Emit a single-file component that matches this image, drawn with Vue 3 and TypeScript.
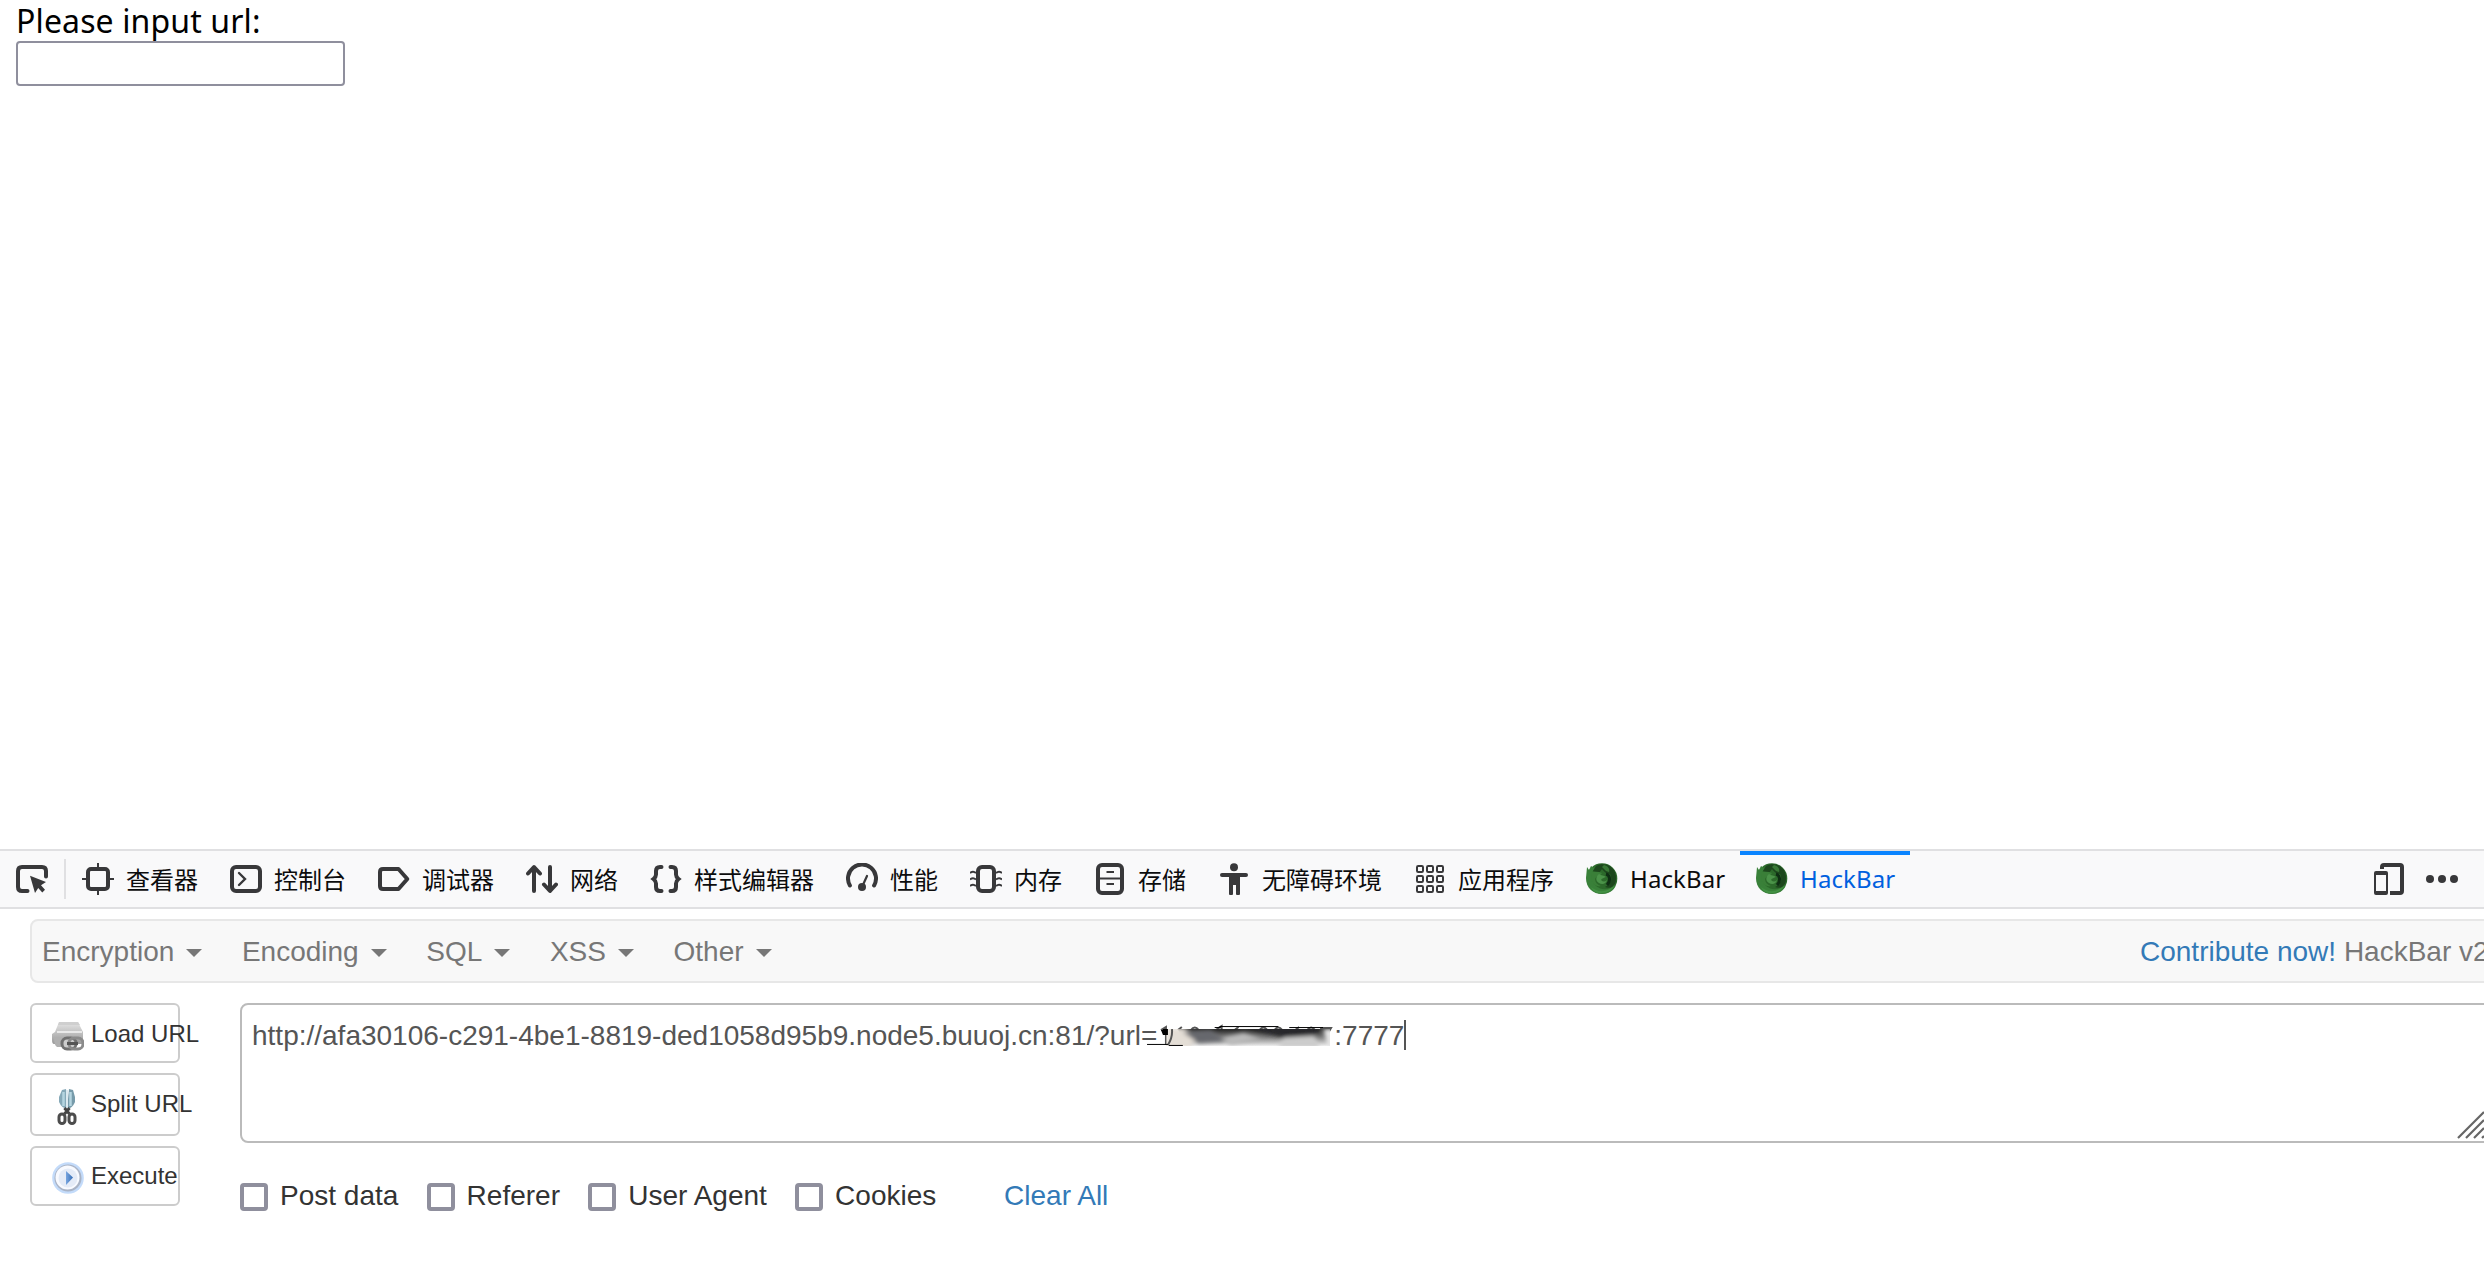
<script setup lang="ts">
interface Tab {
  label: string
  icon: string
  logo?: boolean
  active?: boolean
}

const logo =
  '<circle cx="16" cy="15.5" r="15.3" fill="#2c6a2b"/>' +
  '<path d="M1 4 3 7 5 3 8 5 10 3C4 10 5 18 10 23c5 4 12 5 20-1C28 28 22 31 16 31 7 31 0 25 0 15Z" fill="#398039"/>' +
  '<path d="M10 3C17-1 26 2 29 9c2 6 1 12-2 15-3 1-6 1-8 0 5-2 8-8 5-13-3 0-6-2-8-5l-3 4-6-2Z" fill="#1d471d"/>' +
  '<path d="M18 2c4 1 6 4 5 7l-3-1-4-4Z" fill="#397936"/>' +
  '<path d="M6 9q6-1 10 1l-2 3q-4 0-5 3 0 5 6 7-5 1-8-3-3-4-1-11Z" fill="#3a7f38"/>' +
  '<path d="M13 11c2 2 5 1 7 3-2 1-4 1-5 3 2 2 4 2 6 0-1 4-5 5-8 3-4-2-3-7 0-9Z" fill="#4b9349"/>' +
  '<path d="M20 11c4 1 5 7 1 11" fill="none" stroke="#0e2e13" stroke-width="3"/>' +
  '<path d="M5 24c7 6 17 6 24-3-2 6-8 9-14 9-5 0-8-2-10-6Z" fill="#439143"/>'

const grid = [3, 13, 23]
  .flatMap((y) => [3, 13, 23].map((x) => `<rect x="${x}" y="${y}" width="6" height="6" rx="1.2" stroke-width="2"/>`))
  .join('')

const tabs: Tab[] = [
  { label: '查看器', icon: '<rect x="6" y="6" width="20" height="20" rx="3"/><path d="M16 0v4M16 28v4M0 16h4M28 16h4" stroke-width="2"/>' },
  { label: '控制台', icon: '<rect x="2" y="4" width="28" height="24" rx="4"/><path d="m9 10 6 6-6 6" stroke-width="2.4" stroke-linecap="round"/>' },
  { label: '调试器', icon: '<path d="M5 6H20.5L29.3 16 20.5 26H5Q2 26 2 23V9Q2 6 5 6Z" stroke-linejoin="round"/>' },
  { label: '网络', icon: '<path d="M8 28V5M2 10.5 8 4l6 6.500M24 4v23M18 21.500l6 6.500 6-6.500" stroke-linecap="round" stroke-linejoin="round"/>' },
  { label: '样式编辑器', icon: '<path d="M11.500 4H10Q6 4 6 8v3.500Q6 14 3.500 16q2.500 2 2.500 4.500V24q0 4 4 4h1.500M20.500 4H22q4 0 4 4v3.500Q26 14 28.500 16q-2.500 2-2.500 4.500V24q0 4-4 4h-1.500" stroke-linecap="round"/>' },
  { label: '性能', icon: '<path d="M3.900 22.500A14 14 0 1 1 28.100 22.500" stroke-linecap="round"/><path d="m16 24 5-11" stroke-width="2.200" stroke-linecap="round"/><circle cx="16" cy="24" r="4" fill="#38383a" stroke="none"/>' },
  { label: '内存', icon: '<rect x="8" y="4" width="16" height="24" rx="4"/><path d="M6 10Q3 7.500 0 10M6 16.500q-3-2.500-6 0M6 23q-3-2.500-6 0M26 10q3-2.500 6 0M26 16.500q3-2.500 6 0M26 23q3-2.500 6 0" stroke-width="2"/>' },
  { label: '存储', icon: '<rect x="4" y="2" width="24" height="28" rx="4"/><path d="M4 15.500h24M12.500 9h7.500M12.500 21h7.500" stroke-width="2"/>' },
  { label: '无障碍环境', icon: '<circle cx="16" cy="4.300" r="4" fill="#38383a" stroke="none"/><path d="M4 12h24" stroke-linecap="round"/><path d="M11 12h11v19q0 1-1 1h-2q-1 0-1-1v-9h-3v9q0 1-1 1h-2q-1 0-1-1Z" fill="#38383a" stroke="none"/>' },
  { label: '应用程序', icon: grid },
  { label: 'HackBar', icon: logo, logo: true },
  { label: 'HackBar', icon: logo, logo: true, active: true },
]

const menus: string[] = ['Encryption', 'Encoding', 'SQL', 'XSS', 'Other']
const options: string[] = ['Post data', 'Referer', 'User Agent', 'Cookies']
</script>

<template>
  <div class="screen">
    <main class="page">
      <div class="prompt">Please input url:</div>
      <div class="field"></div>
    </main>

    <header class="toolbar">
      <svg class="icon picker" viewBox="0 0 32 32">
        <path d="M11.500 28H6Q2 28 2 24V8Q2 4 6 4H26Q30 4 30 8V13.500" stroke-linecap="round" />
        <path d="M14 12.700 30 19 25 22.300 29 26.700 26.300 29.500 22.200 25 19 30Z" fill="#38383a" stroke="none" />
      </svg>
      <i class="divider"></i>
      <div v-for="(tab, i) in tabs" :key="i" class="tab" :class="{ active: tab.active, latin: tab.logo }">
        <svg class="icon" viewBox="0 0 32 32" v-html="tab.icon"></svg>
        <span>{{ tab.label }}</span>
      </div>
      <div class="tools">
        <svg class="icon" viewBox="0 0 32 32">
          <path d="M8 6V4Q8 0 12 0H28Q32 0 32 4V28Q32 32 28 32H18V28H28V4H12V6Z" fill="#38383a" stroke="none" />
          <path fill-rule="evenodd" d="M4 8H14Q16 8 16 10V30Q16 32 14 32H4Q2 32 2 30V10Q2 8 4 8ZM4 12V28H14V12Z" fill="#38383a" stroke="none" />
        </svg>
        <svg class="icon" viewBox="0 0 32 32">
          <g fill="#38383a" stroke="none"><circle cx="4" cy="16" r="4" /><circle cx="16" cy="16" r="4" /><circle cx="28" cy="16" r="4" /></g>
        </svg>
        <svg class="icon" viewBox="0 0 32 32"><path d="m6 7 18 18M6 25 24 7" stroke-width="3" stroke-linecap="round" /></svg>
      </div>
    </header>

    <section class="hackbar">
      <nav class="menu">
        <span v-for="m in menus" :key="m" class="item">{{ m }}<i class="caret"></i></span>
        <span class="about"><a>Contribute now!</a> HackBar v2</span>
      </nav>

      <div class="work">
        <div class="buttons">
          <div class="btn">
            <svg viewBox="0 0 32 32">
              <defs><linearGradient id="metal" x2="0" y2="1"><stop stop-color="#e6e6e6" /><stop offset="1" stop-color="#999" /></linearGradient></defs>
              <path d="M7 2H26L31 12V24H2Q0 24 0 20V14L3 12Z" fill="url(#metal)" />
              <path d="M7 2H26L28 5H6Z" fill="#cfcfcf" /><path d="M5 12H30" stroke="#f4f4f4" stroke-width="1.500" />
              <path d="M2 18H15V27H5Q2 25 2 18Z" fill="#b0b0b0" />
              <rect x="10" y="18" width="14" height="11" rx="5" fill="#ccc" stroke="#707070" stroke-width="3" />
              <rect x="17" y="18" width="14" height="11" rx="5" fill="none" stroke="#8b8b8b" stroke-width="3" />
              <path d="M15 23.500H26" stroke="#555" stroke-width="3" />
            </svg>
            <span>Load URL</span>
          </div>
          <div class="btn split">
            <svg viewBox="0 0 32 36">
              <path d="M10 1 14 0 16 20Q10 20 7 13V8Z" fill="#86a9b8" /><path d="M21 1 17 0 15 20Q20 20 23 13V8Z" fill="#779baa" />
              <path d="M11.500 3V17M18.500 3V17" stroke="#b5d5e0" stroke-width="2.500" /><path d="M15 1V20" stroke="#dceaf0" stroke-width="2" />
              <path d="m12.500 19 5 6M17.500 19l-5 6" stroke="#444" stroke-width="3" />
              <rect x="7" y="25" width="6" height="9.500" rx="3" fill="#fff" stroke="#4c4c4c" stroke-width="3" />
              <rect x="17" y="25" width="6" height="9.500" rx="3" fill="#fff" stroke="#4c4c4c" stroke-width="3" />
            </svg>
            <span>Split URL</span>
          </div>
          <div class="btn exec">
            <svg viewBox="0 0 32 32">
              <defs><linearGradient id="play" x2="1"><stop stop-color="#78a5df" /><stop offset="1" stop-color="#356db5" /></linearGradient></defs>
              <circle cx="16" cy="16" r="15.800" fill="#c3dbfa" /><circle cx="16" cy="16" r="13.500" fill="#a9b3c5" />
              <circle cx="15.500" cy="15.500" r="12" fill="#f8faff" /><circle cx="16" cy="16" r="9.500" fill="#e4ebf7" />
              <path d="M14 9 21 15.500 14 23Z" fill="url(#play)" />
            </svg>
            <span>Execute</span>
          </div>
        </div>

        <div class="main">
          <div class="textarea">
            <span>http://afa30106-c291-4be1-8819-ded1058d95b9.node5.buuoj.cn:81/?url=</span>
            <svg class="smear" viewBox="0 0 178 36">
              <defs>
                <linearGradient id="ink" x2="0" y2="1"><stop stop-color="#222" /><stop offset=".45" stop-color="#777" /><stop offset="1" stop-color="#eee" /></linearGradient>
                <filter id="soft"><feGaussianBlur stdDeviation="2" /></filter>
                <clipPath id="band"><rect x="9" y="11" width="165" height="17" /></clipPath>
              </defs>
              <path d="M4 12 9 9V27M21 12l4-3M34 12q4-5 8 0M60 11l5-3v4M78 12l4-3M103 12q4-5 8 0M118 12q4-5 8 0M139 12l4-3M151 12q4-5 8 0M164 10h11l-3 5" fill="none" stroke="#555" stroke-width="2" />
              <g clip-path="url(#band)">
                <rect x="22" y="11" width="153" height="17" fill="url(#ink)" />
                <g filter="url(#soft)">
                  <path d="M9 10H27L42 18 33 30H9Z" fill="#e4ded6" />
                  <path d="M26 14 54 12 69 23 42 25Z" fill="#66686d" />
                  <path d="M66 20 87 15 105 21 74 27Z" fill="#bbb" />
                  <path d="M86 9H165L158 17 126 19Z" fill="#27282a" />
                  <path d="M128 20 158 18 164 29H121Z" fill="#ccc" />
                  <path d="M167 11H178V29H172Z" fill="#e8e8e8" />
                </g>
                <path d="M11 27Q16 19 15 11" fill="none" stroke="#555" stroke-width="2" />
              </g>
              <path d="M4 12h7v5H6ZM6 11h5v6H6Z" fill="#000" />
              <path d="M-10 26.500H11M12 27.500H26M58 9.500H64M63 8.500H122M133 9.500H167" stroke="#000" stroke-width="1" />
            </svg>
            <span>:7777</span><i class="cursor"></i>
            <svg class="grip" viewBox="0 0 28 28"><path d="M2 27 28 1M10 27 28 9M18 27 28 17M26 27 28 25" stroke="#666" stroke-width="2.200" /></svg>
          </div>
          <div class="options">
            <label v-for="o in options" :key="o"><i class="box"></i><span>{{ o }}</span></label>
            <a class="clear">Clear All</a>
          </div>
        </div>
      </div>
    </section>
  </div>
</template>

<style>
body { margin: 0; background: #fff; overflow: hidden; }
</style>

<style scoped>
.screen { width: 100vw; height: 1275px; overflow: hidden; background: #fff; display: flex; flex-direction: column; font-family: "Liberation Sans", Arial, sans-serif; }
.page { height: 849px; flex: none; box-sizing: border-box; padding: 0 16px; }
.prompt { height: 41px; line-height: 42px; font-family: "Noto Sans", sans-serif; font-size: 32px; letter-spacing: 0.13px; color: #000; white-space: nowrap; }
.field { width: 329px; height: 45px; box-sizing: border-box; border: 2px solid #8f8f9d; border-radius: 4px; }
.toolbar { flex: none; height: 60px; box-sizing: border-box; border-top: 2px solid #e0e0e2; border-bottom: 2px solid #e0e0e2; background: #f9f9fa; display: flex; align-items: center; overflow: hidden; }
.icon { width: 32px; height: 32px; flex: none; fill: none; stroke: #38383a; stroke-width: 4; }
.picker { margin: 0 16px; }
.divider { width: 2px; height: 40px; background: #e0e0e2; flex: none; }
.tab { height: 56px; flex: none; box-sizing: border-box; padding: 0 16px; display: flex; align-items: center; gap: 12px; font: 24px/48px "Noto Sans CJK SC", sans-serif; color: #0c0c0d; border-top: 4px solid transparent; border-bottom: 4px solid transparent; white-space: nowrap; }
.latin { font-family: "Noto Sans", sans-serif; letter-spacing: 0.1px; }
.latin .icon { stroke: none; }
.latin span { width: 94px; }
.active { color: #0060df; border-top-color: #0a84ff; }
.tools { margin-left: auto; margin-right: -28px; display: flex; gap: 22px; }
.hackbar { padding: 10px 0 0 30px; }
.menu { width: 2500px; height: 64px; box-sizing: border-box; border: 2px solid #e7e7e7; border-radius: 8px; background: #f8f8f8; display: flex; align-items: center; gap: 39.6px; padding-left: 10px; font-size: 28px; line-height: 58px; color: #777; white-space: nowrap; }
.item { display: flex; align-items: center; gap: 12px; padding-top: 2px; }
.caret { border: 8px solid transparent; border-top-color: #777; border-bottom: 0; margin-top: 2px; }
.about { margin-left: auto; width: 388px; flex: none; padding-top: 2px; }
a { color: #337ab7; }
.work { display: flex; margin-top: 20px; gap: 60px; }
.buttons { width: 150px; flex: none; display: flex; flex-direction: column; gap: 10px; }
.btn { height: 60px; box-sizing: border-box; border: 2px solid #ccc; border-radius: 6px; padding: 0 0 0 20px; display: flex; align-items: center; gap: 7px; font-size: 24px; line-height: 54px; color: #333; white-space: nowrap; }
.btn svg { width: 32px; height: 32px; flex: none; margin-top: 6px; }
.btn span { padding-top: 2px; }
.split { height: 63px; }
.split svg { height: 36px; margin-top: 4px; }
.split span { padding-top: 0; padding-bottom: 1px; }
.exec svg { margin-top: 4px; }
.exec span { padding-top: 0; }
.main { width: 2260px; flex: none; }
.textarea { position: relative; height: 140px; box-sizing: border-box; border: 2px solid #bbb; border-radius: 8px; padding: 13px 10px; display: flex; align-items: flex-start; font-size: 28px; line-height: 36px; color: #555; white-space: nowrap; }
.smear { width: 177px; height: 36px; flex: none; overflow: visible; }
.cursor { width: 2px; height: 30px; background: #555; margin-top: 2px; }
.grip { position: absolute; left: 2214px; bottom: 2px; width: 28px; height: 28px; }
.options { display: flex; gap: 28.3px; margin-top: 37px; height: 32px; font-size: 28px; line-height: 32px; color: #333; white-space: nowrap; }
label { display: flex; gap: 12px; }
.box { width: 28px; height: 28px; box-sizing: border-box; border: 4px solid #8f8f9d; border-radius: 4px; margin-top: 3px; }
.clear { margin-left: 39.5px; }
</style>
